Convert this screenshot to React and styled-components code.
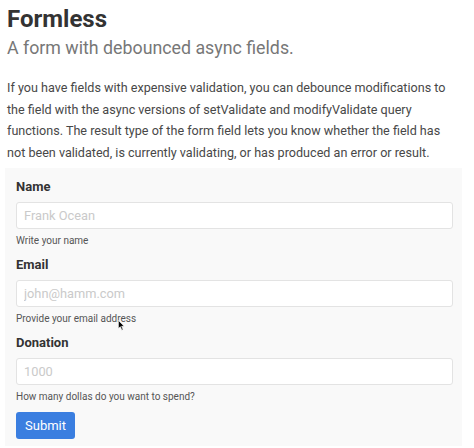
import React from "react";
import styled, { createGlobalStyle } from "styled-components";

const Global = createGlobalStyle`
  html, body { margin: 0; padding: 0; background: #fff; }
  body { font-family: Roboto, "Liberation Sans", Arial, sans-serif; color: #333; }
  * { box-sizing: border-box; }
`;

const Page = styled.div`
  padding: 4px 12px 0 5px;
  position: relative;
`;

const Title = styled.h1`
  margin: 0 0 0 2px;
  font-size: 24px;
  line-height: 30px;
  font-weight: 700;
  color: #333;
`;

const Subtitle = styled.h2`
  margin: 2px 0 0 2px;
  font-size: 17.8px;
  line-height: 24px;
  font-weight: 400;
  color: #777;
`;

const Intro = styled.p`
  margin: 17px 0 0 2px;
  max-width: 444px;
  font-size: 12.6px;
  line-height: 21.5px;
  color: #484848;
`;

const Panel = styled.form`
  margin-top: 5px;
  background: #f9f9f9;
  padding: 10px 9px 7px 11px;
  display: flex;
  flex-direction: column;
`;

const Field = styled.div`
  display: flex;
  flex-direction: column;
  margin-bottom: 9px;
`;

const Label = styled.label`
  font-size: 13px;
  line-height: 18px;
  font-weight: 700;
  color: #333;
  margin-bottom: 6px;
`;

const Input = styled.input`
  height: 27px;
  border: 1px solid #e3e3e3;
  border-radius: 3px;
  background: #fff;
  padding: 0 7px;
  font-family: inherit;
  font-size: 12.8px;
  color: #333;
  outline: none;
  &::placeholder { color: #cacaca; }
`;

const Help = styled.small`
  margin-top: 5px;
  font-size: 10px;
  line-height: 13px;
  color: #555;
`;

const Submit = styled.button`
  align-self: flex-start;
  height: 27px;
  width: 59px;
  padding: 0;
  border: none;
  border-radius: 3px;
  background: #3a7ee0;
  color: #fff;
  font-family: inherit;
  font-size: 13px;
  line-height: 27px;
`;

const Cursor = styled.svg`
  position: absolute;
  left: 118px;
  top: 320px;
  width: 7px;
  height: 11px;
  pointer-events: none;
`;

const fields = [
  { id: "name", label: "Name", placeholder: "Frank Ocean", help: "Write your name" },
  { id: "email", label: "Email", placeholder: "john@hamm.com", help: "Provide your email address" },
  { id: "donation", label: "Donation", placeholder: "1000", help: "How many dollas do you want to spend?" },
];

export default function App() {
  return (
    <>
      <Global />
      <Page>
        <Title>Formless</Title>
        <Subtitle>A form with debounced async fields.</Subtitle>
        <Intro>
          If you have fields with expensive validation, you can debounce modifications to the field
          with the async versions of setValidate and modifyValidate query functions. The result type
          of the form field lets you know whether the field has not been validated, is currently
          validating, or has produced an error or result.
        </Intro>
        <Panel onSubmit={(e) => e.preventDefault()}>
          {fields.map((f) => (
            <Field key={f.id}>
              <Label htmlFor={f.id}>{f.label}</Label>
              <Input id={f.id} placeholder={f.placeholder} />
              <Help>{f.help}</Help>
            </Field>
          ))}
          <Submit type="submit">Submit</Submit>
        </Panel>
        <Cursor viewBox="0 0 9 14">
          <path d="M0.5 0.5 L0.5 11 L3 8.6 L5 13 L6.6 12.3 L4.7 8 L8 8 Z" fill="#000" stroke="#fff" strokeWidth="0.8" />
        </Cursor>
      </Page>
    </>
  );
}
